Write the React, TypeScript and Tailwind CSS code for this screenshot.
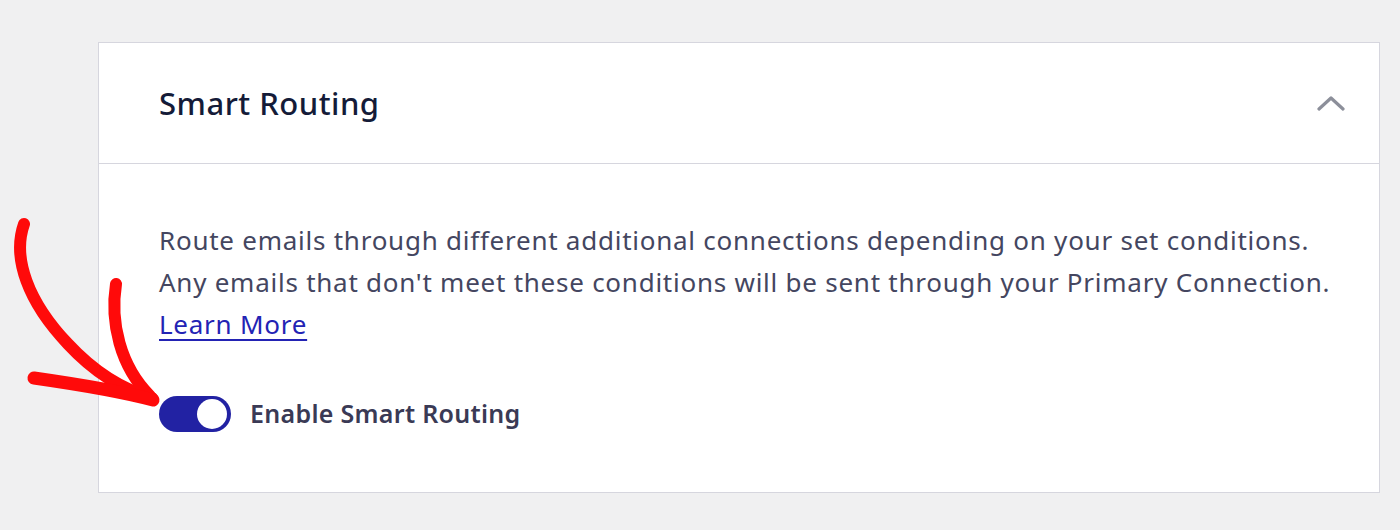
import React, { useState } from "react";

const font = { fontFamily: '"Noto Sans", "Open Sans", sans-serif' };

const Chevron = () => (
    <svg width="28" height="16" viewBox="0 0 28 16" fill="none">
        <path d="M2 14 L14 3 L26 14" stroke="#8c8f9a" strokeWidth="3.2" strokeLinecap="round" strokeLinejoin="round" />
    </svg>
);

// hand drawn red arrow pointing at the toggle
const RedArrow = () => (
    <svg className="absolute left-0 top-0 pointer-events-none" width="180" height="430" viewBox="0 0 180 430" fill="none">
        <g stroke="#ff0a0a" strokeLinecap="round" strokeLinejoin="round">
            <path strokeWidth="12" d="M24 224 C 12 258, 28 302, 68 344 C 94 372, 124 390, 152 398" />
            <path strokeWidth="12" d="M116 284 C 110 322, 120 366, 150 396" />
            <path strokeWidth="13" d="M34 378 C 76 384, 116 390, 153 400" />
        </g>
    </svg>
);

export default function App() {
    const [enabled, setEnabled] = useState(true);

    return (
        <div className="relative min-h-[530px] w-[1400px] bg-[#f0f0f1] pt-[42px] pl-[98px]" style={font}>
            <div className="w-[1282px] bg-white border border-[#d6d6de]">
                <div className="h-[121px] flex items-center justify-between pl-[60px] pr-[34px] border-b border-[#d6d6de]">
                    <h2 className="text-[31px] font-medium text-[#141b38] tracking-[0.5px]">Smart Routing</h2>
                    <Chevron />
                </div>
                <div className="pl-[60px] pr-[30px] pt-[55px] pb-[59px]">
                    <p className="text-[26px] leading-[42px] text-[#444660] tracking-[0.75px] whitespace-nowrap">
                        Route emails through different additional connections depending on your set conditions.
                        <br />
                        Any emails that don't meet these conditions will be sent through your Primary Connection.
                        <br />
                        <a href="#" className="text-[#2323b4] underline underline-offset-[5px] decoration-[2px]">Learn More</a>
                    </p>
                    <div className="mt-[50px] flex items-center gap-[19px]">
                        <button
                            onClick={() => setEnabled(!enabled)}
                            className={enabled
                                ? "w-[72px] h-[36px] rounded-full bg-[#2222a3] flex items-center justify-end px-[4px]"
                                : "w-[72px] h-[36px] rounded-full bg-[#c3c4cc] flex items-center justify-start px-[4px]"}
                        >
                            <span className="w-[30px] h-[30px] rounded-full bg-white block" />
                        </button>
                        <span className="text-[25px] font-semibold text-[#3a3a55] tracking-[0.3px]">Enable Smart Routing</span>
                    </div>
                </div>
            </div>
            <RedArrow />
        </div>
    );
}
